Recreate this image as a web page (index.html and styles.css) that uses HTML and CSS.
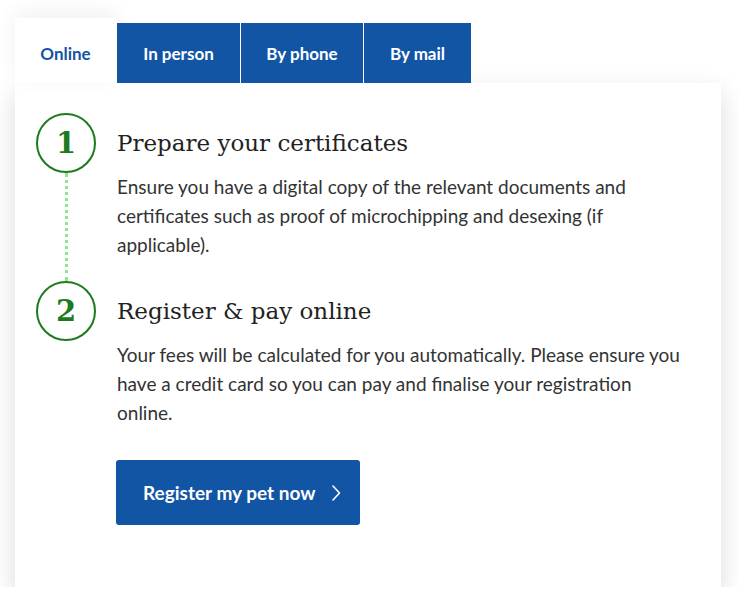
FILE: index.html
```html
<!DOCTYPE html>
<html lang="en">
<head>
<meta charset="utf-8">
<title>Register your pet</title>
<link rel="stylesheet" href="styles.css">
</head>
<body>
<div class="wrap">
  <div class="tabs">
    <div class="tab active">Online</div>
    <div class="tab tab-person">In person</div>
    <div class="tab tab-phone">By phone</div>
    <div class="tab tab-mail">By mail</div>
  </div>
  <div class="card">
    <div class="step step-first">
      <div class="marker">
        <div class="circle">1</div>
        <div class="line"></div>
      </div>
      <div class="body">
        <h2 class="step-title">Prepare your certificates</h2>
        <p class="step-text">Ensure you have a digital copy of the relevant documents and certificates such as proof of microchipping and desexing (if applicable).</p>
      </div>
    </div>
    <div class="step">
      <div class="marker">
        <div class="circle">2</div>
      </div>
      <div class="body">
        <h2 class="step-title">Register &amp; pay online</h2>
        <p class="step-text">Your fees will be calculated for you automatically. Please ensure you have a credit card so you can pay and finalise your registration online.</p>
        <a class="button" href="#">Register my pet now
          <svg class="chev" width="10" height="18" viewBox="0 0 10 18"><path d="M2 2 L8.5 9 L2 16" fill="none" stroke="#fff" stroke-width="1.6" stroke-linecap="round" stroke-linejoin="round"/></svg>
        </a>
      </div>
    </div>
  </div>
</div>
</body>
</html>
```
FILE: styles.css
```css
html, body {
  margin: 0;
  padding: 0;
  background: #fff;
}
body {
  font-family: "Lato", "Liberation Sans", sans-serif;
  color: #2b2b2b;
}
.wrap {
  width: 706px;
  padding: 18px 0 0 15px;
}
.tabs {
  display: flex;
  align-items: flex-end;
  height: 65px;
}
.tab {
  box-sizing: border-box;
  height: 60px;
  display: flex;
  align-items: center;
  justify-content: center;
  background: #1355a5;
  color: #fff;
  font-weight: 700;
  font-size: 17px;
  border-left: 1px solid #fff;
}
.tab.active {
  width: 101px;
  height: 65px;
  background: #fff;
  color: #1355a5;
  border-left: none;
  padding-top: 5px;
  box-shadow: 0 -6px 20px rgba(0, 0, 0, 0.06);
}
.tab-person { width: 124px; }
.tab-phone { width: 123px; }
.tab-mail { width: 108px; }
.card {
  background: #fff;
  padding: 30px 33px 62px 21px;
  box-shadow: 0 10px 24px rgba(0, 0, 0, 0.15);
}
.step {
  display: grid;
  grid-template-columns: 60px 1fr;
  column-gap: 21px;
}
.marker {
  display: flex;
  flex-direction: column;
  align-items: center;
}
.circle {
  box-sizing: border-box;
  width: 60px;
  height: 60px;
  border-radius: 50%;
  border: 2px solid #1e7a1e;
  color: #1e7a1e;
  display: flex;
  align-items: center;
  justify-content: center;
  font-family: "DejaVu Serif", serif;
  font-weight: 700;
  font-size: 29px;
  flex: none;
}
.line {
  flex: 1;
  width: 0;
  border-left: 3px dotted #8de88d;
}
.body {
  min-width: 0;
}
.step-first .body {
  padding-bottom: 22px;
}
.step-title {
  margin: 15px 0 0;
  font-family: "DejaVu Serif", serif;
  font-weight: 400;
  font-size: 23px;
  line-height: 30px;
  color: #222;
}
.step-text {
  margin: 14px 0 0;
  font-size: 19px;
  line-height: 29px;
  color: #333;
}
.button {
  display: inline-flex;
  align-items: center;
  gap: 16px;
  margin-top: 33px;
  margin-left: -1px;
  height: 65px;
  box-sizing: border-box;
  padding: 0 19px 0 27px;
  background: #1355a5;
  color: #fff;
  border-radius: 3px;
  font-weight: 700;
  font-size: 19px;
  text-decoration: none;
}
.chev { display: block; }
```
